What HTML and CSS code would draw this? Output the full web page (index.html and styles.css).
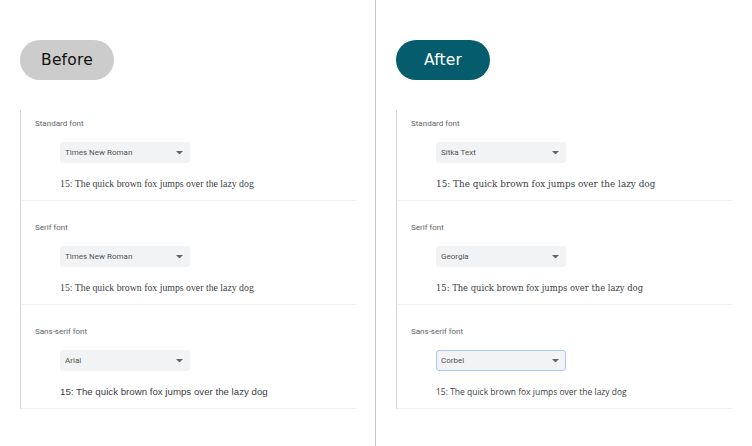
FILE: index.html
```html
<!DOCTYPE html>
<html>
<head>
<meta charset="utf-8">
<link rel="stylesheet" href="styles.css">
</head>
<body>
<div class="compare">
  <div class="col col-before">
    <div class="pill pill-before">Before</div>
    <div class="panel">
      <div class="section">
        <div class="label">Standard font</div>
        <div class="select"><span>Times New Roman</span><svg class="arrow" viewBox="0 0 8 4"><path d="M0 0h8L4 4z"/></svg></div>
        <div class="sample s-times">15: The quick brown fox jumps over the lazy dog</div>
      </div>
      <div class="section">
        <div class="label">Serif font</div>
        <div class="select"><span>Times New Roman</span><svg class="arrow" viewBox="0 0 8 4"><path d="M0 0h8L4 4z"/></svg></div>
        <div class="sample s-times">15: The quick brown fox jumps over the lazy dog</div>
      </div>
      <div class="section">
        <div class="label">Sans-serif font</div>
        <div class="select"><span>Arial</span><svg class="arrow" viewBox="0 0 8 4"><path d="M0 0h8L4 4z"/></svg></div>
        <div class="sample s-arial">15: The quick brown fox jumps over the lazy dog</div>
      </div>
    </div>
  </div>
  <div class="col col-after">
    <div class="pill pill-after">After</div>
    <div class="panel">
      <div class="section">
        <div class="label">Standard font</div>
        <div class="select"><span>Sitka Text</span><svg class="arrow" viewBox="0 0 8 4"><path d="M0 0h8L4 4z"/></svg></div>
        <div class="sample s-sitka">15: The quick brown fox jumps over the lazy dog</div>
      </div>
      <div class="section">
        <div class="label">Serif font</div>
        <div class="select"><span>Georgia</span><svg class="arrow" viewBox="0 0 8 4"><path d="M0 0h8L4 4z"/></svg></div>
        <div class="sample s-georgia">15: The quick brown fox jumps over the lazy dog</div>
      </div>
      <div class="section">
        <div class="label">Sans-serif font</div>
        <div class="select focused"><span>Corbel</span><svg class="arrow" viewBox="0 0 8 4"><path d="M0 0h8L4 4z"/></svg></div>
        <div class="sample s-corbel">15: The quick brown fox jumps over the lazy dog</div>
      </div>
    </div>
  </div>
</div>
</body>
</html>
```
FILE: styles.css
```css
* { box-sizing: border-box; }
html, body { margin: 0; padding: 0; background: #fff; }
body { font-family: Roboto, "Liberation Sans", sans-serif; width: 752px; height: 446px; overflow: hidden; }
.compare { display: flex; height: 446px; }
.col { width: 376px; padding-top: 40px; }
.col-before { padding-left: 20px; border-right: 1px solid #c8c8c8; }
.col-after { padding-left: 20px; width: 376px; }
.pill {
  width: 94px; height: 40px; border-radius: 20px;
  display: flex; align-items: center; justify-content: center;
  font-family: "DejaVu Sans", Inter, sans-serif; font-size: 15.5px; letter-spacing: 0.2px;
}
.pill-before { background: #cccccc; color: #111; }
.pill-after { background: #055c6c; color: #fff; }
.panel { margin-top: 30px; border-left: 1px solid #dadce0; width: 336px; }
.section { padding: 22px 0 9px 14px; border-bottom: 1px solid #f1f1f1; }
.section:first-child { padding-top: 9px; }
.label { font-size: 8px; line-height: 10px; color: #5f6368; }
.select {
  margin: 13px 0 0 25px; width: 130px; height: 21px; border-radius: 3px;
  background: #f1f3f4; display: flex; align-items: center; justify-content: space-between;
  padding: 0 6px 0 4px; font-size: 8px; color: #555; border: 1px solid transparent;
}
.select.focused { border-color: #a8c7fa; }
.arrow { width: 7px; height: 3.5px; fill: #666; }
.sample { margin: 14px 0 0 25px; line-height: 14px; color: #3c4043; white-space: nowrap; }
.s-times { font-family: "Liberation Serif", serif; font-size: 9.8px; }
.s-arial { font-family: "Liberation Sans", sans-serif; font-size: 9.7px; }
.s-sitka { font-family: "DejaVu Serif", serif; font-size: 8.9px; }
.s-georgia { font-family: "DejaVu Serif", serif; font-size: 8.4px; }
.s-corbel { font-family: "Open Sans", sans-serif; font-size: 8.5px; }
```
